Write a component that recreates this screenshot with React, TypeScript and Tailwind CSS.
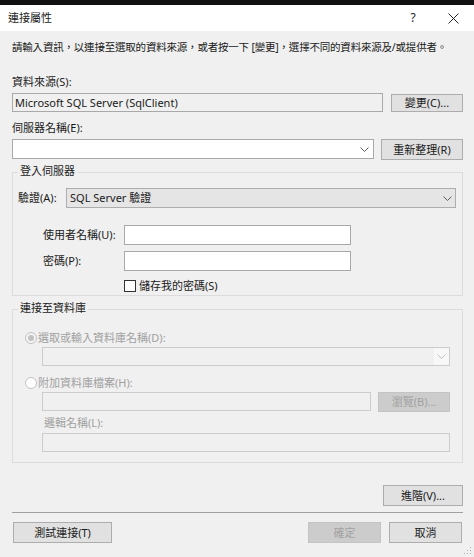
import React from "react";

const Chevron = ({ color = "#606060" }: { color?: string }) => (
  <svg width="9" height="5" viewBox="0 0 9 5" className="shrink-0">
    <path d="M0.5 0.5 L4.5 4.5 L8.5 0.5" fill="none" stroke={color} strokeWidth="1" />
  </svg>
);

const Btn = ({
  children,
  className = "",
  disabled = false,
}: {
  children: React.ReactNode;
  className?: string;
  disabled?: boolean;
}) => (
  <div
    className={
      "flex items-center justify-center border shrink-0 " +
      (disabled
        ? "bg-[#cccccc] border-[#c4c4c4] text-[#a2a2a2] "
        : "bg-[#e1e1e1] border-[#adadad] text-[#1a1a1a] ") +
      className
    }
  >
    {children}
  </div>
);

export default function App() {
  return (
    <div className="relative w-[474px] h-[557px] bg-[#f0f0f0] flex flex-col overflow-hidden font-['Noto_Sans','Noto_Sans_CJK_TC',sans-serif] text-[11px] leading-[16px] text-[#1a1a1a]">
      <div className="h-[5px] bg-[#111111] shrink-0" />
      <div className="h-[26px] bg-white flex items-center shrink-0">
        <span className="pl-[8px]">連接屬性</span>
        <span className="ml-auto w-[30px] text-center text-[12px] text-[#222]">?</span>
        <span className="ml-[8px] mr-[4px] w-[34px] flex justify-center">
          <svg width="11" height="11" viewBox="0 0 11 11">
            <path d="M0.5 0.5 L10.5 10.5 M10.5 0.5 L0.5 10.5" stroke="#222" strokeWidth="1" />
          </svg>
        </span>
      </div>

      <div className="flex flex-col pl-[12px] pr-[11px]">
        <div className="mt-[8px] whitespace-nowrap text-[10.5px] tracking-[-0.2px]">
          請輸入資訊，以連接至選取的資料來源，或者按一下 [變更]，選擇不同的資料來源及/或提供者。
        </div>

        <div className="mt-[19px]">資料來源(S):</div>
        <div className="mt-[3px] flex items-start gap-[8px]">
          <div className="w-[371px] h-[19px] border border-[#a9a9a9] bg-[#f0f0f0] px-[2px] flex items-center">
            Microsoft SQL Server (SqlClient)
          </div>
          <Btn className="w-[72px] h-[18px] mt-[1px]">變更(C)...</Btn>
        </div>

        <div className="mt-[8px]">伺服器名稱(E):</div>
        <div className="mt-[3px] flex items-start gap-[7px]">
          <div className="w-[362px] h-[20px] border border-[#a9a9a9] bg-white flex items-center justify-end pr-[4px]">
            <Chevron />
          </div>
          <Btn className="w-[82px] h-[21px]">重新整理(R)</Btn>
        </div>

        {/* group 1 */}
        <div className="mt-[12px] border border-[#dcdcdc] pl-[5px] pr-[6px] pb-[1px] flex flex-col">
          <div className="-mt-[10px] px-[2px] w-fit bg-[#f0f0f0]">登入伺服器</div>
          <div className="mt-[9px] flex items-center">
            <div className="w-[48px]">驗證(A):</div>
            <div className="flex-1 h-[20px] border border-[#adadad] bg-[#e5e5e5] flex items-center justify-between pl-[3px] pr-[3px]">
              <span>SQL Server 驗證</span>
              <Chevron />
            </div>
          </div>
          <div className="mt-[17px] flex items-center pl-[25px]">
            <div className="w-[81px]">使用者名稱(U):</div>
            <div className="w-[227px] h-[20px] border border-[#a9a9a9] bg-white" />
          </div>
          <div className="mt-[6px] flex items-center pl-[25px]">
            <div className="w-[81px]">密碼(P):</div>
            <div className="w-[227px] h-[20px] border border-[#a9a9a9] bg-white" />
          </div>
          <div className="mt-[7px] flex items-center pl-[106px] gap-[3px]">
            <div className="w-[12px] h-[12px] border border-[#333333] bg-white" />
            <span>儲存我的密碼(S)</span>
          </div>
        </div>

        {/* group 2 */}
        <div className="mt-[13px] border border-[#dcdcdc] pl-[5px] pr-[6px] pb-[10px] flex flex-col text-[#a0a0a0]">
          <div className="-mt-[10px] px-[2px] w-fit bg-[#f0f0f0] text-[#1a1a1a]">連接至資料庫</div>
          <div className="mt-[14px] flex items-center pl-[7px] gap-[1px]">
            <div className="w-[12px] h-[12px] rounded-full border border-[#c2c2c2] bg-[#f4f4f4] flex items-center justify-center">
              <div className="w-[6px] h-[6px] rounded-full bg-[#c2c2c2]" />
            </div>
            <span>選取或輸入資料庫名稱(D):</span>
          </div>
          <div className="mt-[1px] ml-[24px] mr-[6px] h-[19px] border border-[#cccccc] bg-[#f0f0f0] flex items-center justify-end">
            <div className="h-full w-[15px] bg-[#f7f7f7] flex items-center justify-center">
              <Chevron color="#c0c0c0" />
            </div>
          </div>
          <div className="mt-[9px] flex items-center pl-[7px] gap-[1px]">
            <div className="w-[12px] h-[12px] rounded-full border border-[#c2c2c2] bg-white" />
            <span>附加資料庫檔案(H):</span>
          </div>
          <div className="mt-[1px] ml-[24px] mr-[6px] flex items-start gap-[7px]">
            <div className="flex-1 h-[19px] border border-[#cccccc] bg-[#f0f0f0]" />
            <Btn disabled className="w-[72px] h-[20px]">瀏覽(B)...</Btn>
          </div>
          <div className="mt-[3px] ml-[26px]">邏輯名稱(L):</div>
          <div className="mt-[2px] ml-[24px] mr-[6px] h-[19px] border border-[#cccccc] bg-[#f0f0f0]" />
        </div>

        <Btn className="mt-[22px] self-end w-[80px] h-[21px]">進階(V)...</Btn>
        <div className="mt-[6px] h-[1px] bg-[#a0a0a0]" />
        <div className="mt-[9px] flex items-center">
          <Btn className="ml-[1px] w-[99px] h-[21px]">測試連接(T)</Btn>
          <div className="ml-auto flex gap-[8px] mr-[1px]">
            <Btn disabled className="w-[73px] h-[21px]">確定</Btn>
            <Btn className="w-[73px] h-[21px]">取消</Btn>
          </div>
        </div>
      </div>

      <svg className="absolute right-[2px] bottom-[2px]" width="8" height="8" viewBox="0 0 8 8">
        <rect x="6" y="0" width="1" height="1" fill="#b0b0b0" />
        <rect x="3" y="3" width="1" height="1" fill="#b0b0b0" />
        <rect x="6" y="3" width="1" height="1" fill="#b0b0b0" />
        <rect x="0" y="6" width="1" height="1" fill="#b0b0b0" />
        <rect x="3" y="6" width="1" height="1" fill="#b0b0b0" />
        <rect x="6" y="6" width="1" height="1" fill="#b0b0b0" />
      </svg>
    </div>
  );
}
